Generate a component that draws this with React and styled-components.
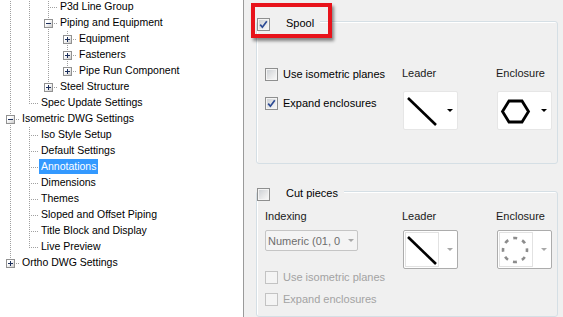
import styled, { createGlobalStyle } from 'styled-components';

const GlobalStyle = createGlobalStyle`
  html, body {
    margin: 0;
    padding: 0;
  }
  body {
    width: 563px;
    height: 317px;
    overflow: hidden;
    background: #f0f0f0;
  }
`;

const treeRows = [
  { label: 'P3d Line Group', guides: 'IIT' },
  { label: 'Piping and Equipment', guides: 'IIT', expander: 'open' },
  { label: 'Equipment', guides: 'IIIT', expander: 'closed' },
  { label: 'Fasteners', guides: 'IIIT', expander: 'closed' },
  { label: 'Pipe Run Component', guides: 'IIIL', expander: 'closed' },
  { label: 'Steel Structure', guides: 'IIL', expander: 'closed' },
  { label: 'Spec Update Settings', guides: 'IL' },
  { label: 'Isometric DWG Settings', guides: 'T', expander: 'open' },
  { label: 'Iso Style Setup', guides: 'IT' },
  { label: 'Default Settings', guides: 'IT' },
  { label: 'Annotations', guides: 'IT', selected: true },
  { label: 'Dimensions', guides: 'IT' },
  { label: 'Themes', guides: 'IT' },
  { label: 'Sloped and Offset Piping', guides: 'IT' },
  { label: 'Title Block and Display', guides: 'IT' },
  { label: 'Live Preview', guides: 'IL' },
  { label: 'Ortho DWG Settings', guides: 'L', expander: 'closed' },
];

const dotsDown = 'repeating-linear-gradient(to bottom, #a0a0a0 0 1px, transparent 1px 2px)';
const dotsAcross = 'repeating-linear-gradient(to right, #a0a0a0 0 1px, transparent 1px 2px)';

const guideBackground = kind => {
  if (kind === 'I') return `${dotsDown} 10px 0 / 1px 16px no-repeat`;
  if (kind === 'T') return `${dotsDown} 10px 0 / 1px 16px no-repeat, ${dotsAcross} 12px 8px / 9px 1px no-repeat`;
  if (kind === 'L') return `${dotsDown} 10px 0 / 1px 9px no-repeat, ${dotsAcross} 12px 8px / 9px 1px no-repeat`;
  return 'none';
};

const Expander = ({ open }) => (
  <ExpanderIcon viewBox="0 0 9 9" width="9" height="9">
    <defs>
      <linearGradient id="expander-fill" x1="0" y1="0" x2="1" y2="1">
        <stop offset="0.35" stopColor="#ffffff" />
        <stop offset="1" stopColor="#c6c6c6" />
      </linearGradient>
    </defs>
    <rect x="0.5" y="0.5" width="8" height="8" fill="url(#expander-fill)" stroke="#919191" />
    <path d="M2 4.5h5" stroke="#1c2f5c" />
    {!open && <path d="M4.5 2v5" stroke="#1c2f5c" />}
  </ExpanderIcon>
);

const Check = ({ checked, disabled }) => (
  <CheckBox $disabled={disabled}>
    {checked && (
      <svg width="9" height="9" viewBox="0 0 9 9">
        <path d="M1.2 4.6 L3.4 7.2 L7.8 1.2" fill="none" stroke="#2c4a94" strokeWidth="1.7" />
      </svg>
    )}
  </CheckBox>
);

const LeaderLine = () => (
  <svg width="32" height="34" viewBox="0 0 32 34">
    <path d="M2 4 L30 31" stroke="#000" strokeWidth="2.6" />
  </svg>
);

const Hexagon = () => (
  <svg width="32" height="34" viewBox="0 0 32 34">
    <path d="M2.5 17.5 L9 7 L22 7 L28.5 17.5 L22 28 L9 28 Z" fill="none" stroke="#000" strokeWidth="2.8" strokeLinejoin="miter" />
  </svg>
);

const DashedCircle = () => (
  <svg width="32" height="34" viewBox="0 0 32 34">
    <circle cx="15" cy="17" r="12" fill="none" stroke="#8c8c8c" strokeWidth="2.6" strokeDasharray="4 5.4" strokeDashoffset="2" />
  </svg>
);

const App = () => {
  return (
    <>
      <GlobalStyle />
      <Window>
        <TreePane>
          <TreeList>
            {treeRows.map(row => (
              <TreeRow key={row.label}>
                {row.guides.split('').map((kind, i) => (
                  <Guide key={i} $kind={kind}>
                    {i === row.guides.length - 1 && row.expander && <Expander open={row.expander === 'open'} />}
                  </Guide>
                ))}
                <NodeLabel $selected={row.selected}>{row.label}</NodeLabel>
              </TreeRow>
            ))}
          </TreeList>
        </TreePane>

        <SettingsPane>
          <GroupBox>
            <GroupHeader>
              <Check checked />
              <HeaderLabel>Spool</HeaderLabel>
            </GroupHeader>
            <SpoolBody>
              <OptionsCol $gap={13}>
                <CheckRow>
                  <Check />
                  <CheckLabel>Use isometric planes</CheckLabel>
                </CheckRow>
                <CheckRow>
                  <Check checked />
                  <CheckLabel>Expand enclosures</CheckLabel>
                </CheckRow>
              </OptionsCol>
              <PickerCol $width={94}>
                <FieldLabel>Leader</FieldLabel>
                <ImageCombo $gap={11}>
                  <Swatch>
                    <LeaderLine />
                  </Swatch>
                  <Caret />
                </ImageCombo>
              </PickerCol>
              <PickerCol>
                <FieldLabel>Enclosure</FieldLabel>
                <ImageCombo $gap={11}>
                  <Swatch>
                    <Hexagon />
                  </Swatch>
                  <Caret />
                </ImageCombo>
              </PickerCol>
            </SpoolBody>
          </GroupBox>

          <GroupBox>
            <GroupHeader>
              <Check />
              <HeaderLabel>Cut pieces</HeaderLabel>
            </GroupHeader>
            <CutBody>
              <PickerRow>
                <PickerCol $width={137}>
                  <FieldLabel>Indexing</FieldLabel>
                  <DropList>
                    <DropText>Numeric (01, 0</DropText>
                    <Caret $muted />
                  </DropList>
                </PickerCol>
                <PickerCol $width={94}>
                  <FieldLabel>Leader</FieldLabel>
                  <ImageCombo $gap={7} $framed>
                    <Swatch $framed>
                      <LeaderLine />
                    </Swatch>
                    <Caret $muted />
                  </ImageCombo>
                </PickerCol>
                <PickerCol>
                  <FieldLabel>Enclosure</FieldLabel>
                  <ImageCombo $gap={7} $framed>
                    <Swatch $framed>
                      <DashedCircle />
                    </Swatch>
                    <Caret $muted />
                  </ImageCombo>
                </PickerCol>
              </PickerRow>
              <OptionsCol $gap={6}>
                <CheckRow>
                  <Check disabled />
                  <CheckLabel $disabled>Use isometric planes</CheckLabel>
                </CheckRow>
                <CheckRow>
                  <Check disabled />
                  <CheckLabel $disabled>Expand enclosures</CheckLabel>
                </CheckRow>
              </OptionsCol>
            </CutBody>
          </GroupBox>

          <Callout />
        </SettingsPane>
      </Window>
    </>
  );
};

const Window = styled.div`
  display: flex;
  width: 563px;
  height: 317px;
  overflow: hidden;
  font-family: 'Liberation Sans', Arial, sans-serif;
`;

const TreePane = styled.div`
  width: 243px;
  flex-shrink: 0;
  background: #fff;
  border-right: 1px solid #9a9a9a;
  overflow: hidden;
`;

const TreeList = styled.div`
  margin-top: -1px;
`;

const TreeRow = styled.div`
  display: flex;
  height: 16px;
`;

const Guide = styled.span`
  display: block;
  width: 19px;
  height: 16px;
  flex-shrink: 0;
  background: ${props => guideBackground(props.$kind)};
`;

const ExpanderIcon = styled.svg`
  display: block;
  margin: 4px 0 0 6px;
`;

const NodeLabel = styled.span`
  margin-left: 1px;
  padding: 0 2px;
  height: 15px;
  line-height: 15px;
  font-size: 10.5px;
  white-space: nowrap;
  color: ${props => (props.$selected ? '#fff' : '#000')};
  background: ${props => (props.$selected ? '#3399ff' : 'transparent')};
`;

const SettingsPane = styled.div`
  position: relative;
  flex: 1;
  padding: 21px 5px 0 12px;
  background: #f0f0f0;
  font-size: 11px;
  color: #000;
`;

const GroupBox = styled.section`
  border: 1px solid #d5dfe5;
  border-radius: 3px;
  box-shadow: inset 1px 1px 0 #fff;
  & + & {
    margin-top: 27px;
  }
`;

const GroupHeader = styled.div`
  display: flex;
  align-items: center;
  width: fit-content;
  height: 13px;
  margin-top: -4px;
  padding-right: 6px;
  background: #f0f0f0;
`;

const HeaderLabel = styled.span`
  margin-left: 16px;
  line-height: 13px;
  margin-top: -2px;
`;

const SpoolBody = styled.div`
  display: flex;
  padding: 35px 0 33px 8px;
`;

const CutBody = styled.div`
  display: flex;
  flex-direction: column;
  padding: 8px 0 9px 8px;
`;

const PickerRow = styled.div`
  display: flex;
`;

const OptionsCol = styled.div`
  display: flex;
  flex-direction: column;
  width: 137px;
  gap: ${props => props.$gap}px;
`;

const CheckRow = styled.div`
  display: flex;
  align-items: center;
  height: 16px;
`;

const CheckBox = styled.span`
  display: flex;
  align-items: center;
  justify-content: center;
  width: 13px;
  height: 13px;
  box-sizing: border-box;
  flex-shrink: 0;
  border: 1px solid ${props => (props.$disabled ? '#c3c3c3' : '#8e8f8f')};
  box-shadow: inset 0 0 0 1px #f4f4f4;
  background: ${props =>
    props.$disabled ? '#f4f4f4' : 'linear-gradient(135deg, #c9cdd2 0%, #e6e7e8 55%, #fbfbfb 100%)'};
`;

const CheckLabel = styled.span`
  margin-left: 5px;
  white-space: nowrap;
  color: ${props => (props.$disabled ? '#a3a3a3' : '#000')};
`;

const PickerCol = styled.div`
  display: flex;
  flex-direction: column;
  width: ${props => (props.$width ? `${props.$width}px` : 'auto')};
`;

const FieldLabel = styled.span`
  height: 14px;
  line-height: 14px;
  color: #1a1a1a;
`;

const ImageCombo = styled.div`
  display: flex;
  align-items: center;
  width: 55px;
  height: 39px;
  box-sizing: border-box;
  margin: ${props => props.$gap}px 0 0 1px;
  padding: 1px;
  background: #fff;
  border: 1px solid ${props => (props.$framed ? '#acacac' : '#e6e6e6')};
  border-radius: 2px;
`;

const Swatch = styled.div`
  display: flex;
  align-items: center;
  justify-content: center;
  width: 34px;
  height: 35px;
  box-sizing: border-box;
  border: 1px solid ${props => (props.$framed ? '#e2e2e2' : 'transparent')};
`;

const Caret = styled.span`
  width: 0;
  height: 0;
  margin-left: 8px;
  border-left: 3px solid transparent;
  border-right: 3px solid transparent;
  border-top: 3px solid ${props => (props.$muted ? '#a8a8a8' : '#000')};
`;

const DropList = styled.div`
  display: flex;
  align-items: center;
  width: 93px;
  height: 21px;
  box-sizing: border-box;
  margin-top: 7px;
  padding-left: 2px;
  background: #f4f4f4;
  border: 1px solid #c5c5c5;
  border-radius: 2px;
`;

const DropText = styled.span`
  width: 72px;
  white-space: nowrap;
  color: #6d6d6d;
`;

const Callout = styled.div`
  position: absolute;
  left: 7px;
  top: 3px;
  width: 81px;
  height: 35px;
  box-sizing: border-box;
  border: 4px solid #e8131b;
  box-shadow: 2px 3px 3px rgba(0, 0, 0, 0.45);
`;

export default App;
